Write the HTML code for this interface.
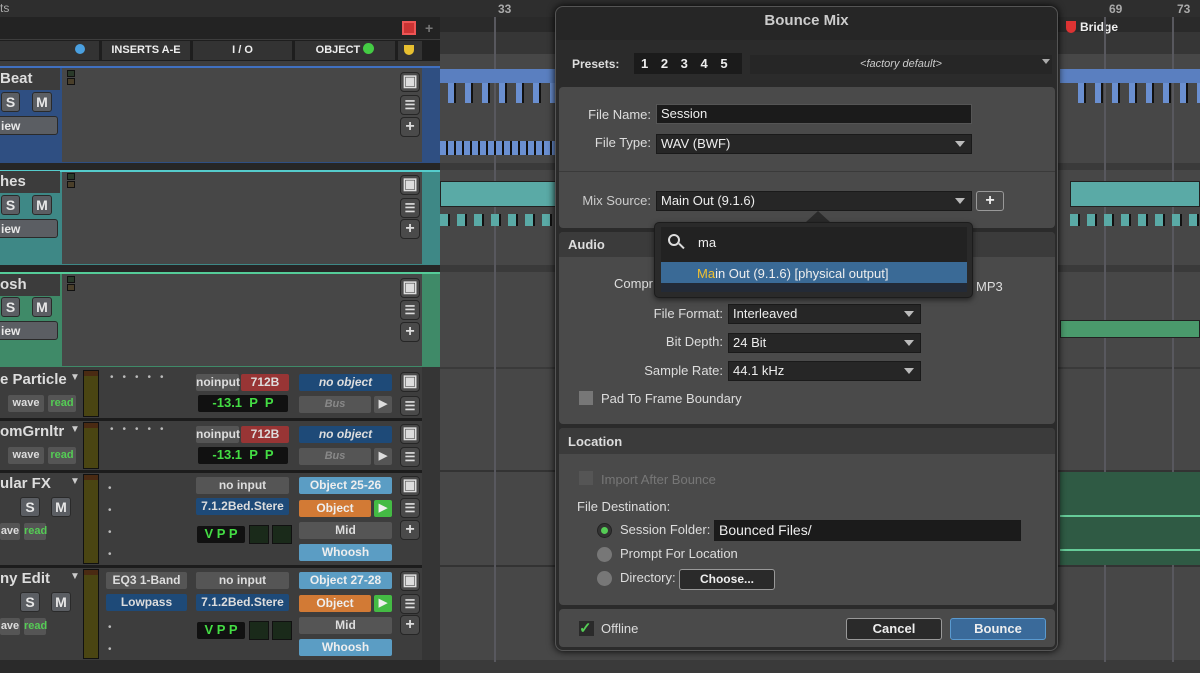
<!DOCTYPE html><html><head><meta charset="utf-8"><style>
*{margin:0;padding:0;box-sizing:border-box}
body{width:1200px;height:673px;overflow:hidden;background:#3d3d3d;font-family:"Liberation Sans",sans-serif;position:relative}
.a{position:absolute}
.b{font-weight:bold}
.btn{position:absolute;background:#5b5e63;border:1px solid #2a2a2a;border-radius:3px;color:#e8e8e8;font-weight:bold;font-size:14px;text-align:center;line-height:18px}
.ic{position:absolute;width:20px;height:20px;background:#4a4a4a;border:1px solid #262626;border-radius:4px;color:#ddd;font-size:16px;font-weight:bold;text-align:center;line-height:18px}
.sm{position:absolute;font-size:11px;font-weight:bold;text-align:center;border-radius:2px;line-height:16px;height:17px}
.lab{position:absolute;color:#ddd;font-size:13px;text-align:right}
.fld{position:absolute;background:#262626;border:1px solid #1a1a1a;color:#eee;font-size:13px;padding-left:4px;line-height:18px;height:20px}
.fld i{position:absolute;right:6px;top:6px;border-left:5px solid transparent;border-right:5px solid transparent;border-top:6px solid #bbb}
.gl{position:absolute;top:17px;width:2px;height:645px;background:#58585e}
.nm{position:absolute;left:0;width:60px;height:22px;background:#3c3c3c;color:#ddd;font-size:15px;font-weight:bold;line-height:22px;white-space:nowrap;overflow:hidden}
</style></head><body>
<div class="a" style="left:0;top:0;width:1200px;height:17px;background:#2e2e2e"></div>
<div class="a" style="left:0;top:1px;color:#aaa;font-size:12px">ts</div>
<div class="a b" style="left:498px;top:2px;color:#aaa;font-size:12px">33</div>
<div class="a b" style="left:1109px;top:2px;color:#aaa;font-size:12px">69</div>
<div class="a b" style="left:1177px;top:2px;color:#aaa;font-size:12px">73</div>
<div class="a" style="left:0;top:17px;width:440px;height:22px;background:#232323"></div>
<div class="a" style="left:440px;top:17px;width:760px;height:15px;background:#2a2a2a"></div>
<div class="a" style="left:440px;top:32px;width:760px;height:22px;background:#363636"></div>
<div class="a" style="left:1066px;top:21px;width:10px;height:12px;background:#d33;border-radius:0 0 5px 5px"></div>
<div class="a b" style="left:1080px;top:20px;color:#eee;font-size:12px">Bridge</div>
<div class="a" style="left:402px;top:21px;width:14px;height:14px;background:#c33;border:2px solid #e55"></div>
<div class="a" style="left:425px;top:20px;color:#777;font-size:14px;font-weight:bold">+</div>
<div class="a" style="left:0;top:40px;width:440px;height:21px;background:#1e1e1e"></div>
<div class="a" style="left:0;top:41px;width:99px;height:19px;background:#333"></div>
<div class="a" style="left:75px;top:44px;width:10px;height:10px;border-radius:50%;background:#4aa0e0"></div>
<div class="a" style="left:102px;top:41px;width:88px;height:19px;background:#333;color:#eee;font-size:11px;font-weight:bold;text-align:center;line-height:19px">INSERTS A-E</div>
<div class="a" style="left:193px;top:41px;width:99px;height:19px;background:#333;color:#eee;font-size:11px;font-weight:bold;text-align:center;line-height:19px">I / O</div>
<div class="a" style="left:295px;top:41px;width:100px;height:19px;background:#333;color:#eee;font-size:11px;font-weight:bold;text-align:center;line-height:19px">OBJECT <span style="display:inline-block;width:11px;height:11px;border-radius:50%;background:#4c4;vertical-align:-1px"></span></div>
<div class="a" style="left:398px;top:41px;width:24px;height:19px;background:#333"></div>
<div class="a" style="left:404px;top:45px;width:10px;height:10px;background:#e8c030;border-radius:0 0 5px 5px"></div>
<div class="a" style="left:440px;top:54px;width:760px;height:619px;background:#474747"></div>
<div class="a" style="left:440px;top:163px;width:760px;height:7px;background:#3a3a3a"></div>
<div class="a" style="left:440px;top:265px;width:760px;height:7px;background:#3a3a3a"></div>
<div class="a" style="left:440px;top:367px;width:760px;height:2px;background:#3a3a3a"></div>
<div class="a" style="left:440px;top:470px;width:760px;height:2px;background:#333"></div>
<div class="a" style="left:440px;top:565px;width:760px;height:2px;background:#333"></div>
<div class="a" style="left:440px;top:660px;width:760px;height:13px;background:#3a3a3a"></div>
<div class="gl" style="left:494px"></div><div class="gl" style="left:1104px"></div><div class="gl" style="left:1172px"></div>
<div class="a" style="left:0;top:66px;width:440px;height:97px;background:#2f4f82;border-top:2px solid #4070c0"></div>
<div class="a" style="left:62px;top:68px;width:360px;height:94px;background:#474747"></div>
<div class="a" style="left:0;top:163px;width:440px;height:7px;background:#262626"></div>
<div class="a" style="left:0;top:170px;width:440px;height:95px;background:#3e8886;border-top:2px solid #5cc"></div>
<div class="a" style="left:62px;top:172px;width:360px;height:92px;background:#474747"></div>
<div class="a" style="left:0;top:265px;width:440px;height:7px;background:#262626"></div>
<div class="a" style="left:0;top:272px;width:440px;height:95px;background:#3f8a68;border-top:2px solid #5c9"></div>
<div class="a" style="left:62px;top:274px;width:360px;height:92px;background:#474747"></div>
<div class="nm" style="top:68px">Beat</div>
<div class="nm" style="top:171px">hes</div>
<div class="nm" style="top:274px">osh</div>
<div class="btn" style="left:1px;top:92px;width:19px;height:20px">S</div><div class="btn" style="left:32px;top:92px;width:20px;height:20px">M</div>
<div class="btn" style="left:1px;top:195px;width:19px;height:20px">S</div><div class="btn" style="left:32px;top:195px;width:20px;height:20px">M</div>
<div class="btn" style="left:1px;top:297px;width:19px;height:20px">S</div><div class="btn" style="left:32px;top:297px;width:20px;height:20px">M</div>
<div class="btn" style="left:-5px;top:116px;width:63px;height:19px;text-align:left;padding-left:5px;font-size:12px">iew</div>
<div class="btn" style="left:-5px;top:219px;width:63px;height:19px;text-align:left;padding-left:5px;font-size:12px">iew</div>
<div class="btn" style="left:-5px;top:321px;width:63px;height:19px;text-align:left;padding-left:5px;font-size:12px">iew</div>
<div class="a" style="left:67px;top:70px;width:8px;height:7px;background:#2a3a2a;border:1px solid #111"></div><div class="a" style="left:67px;top:78px;width:8px;height:7px;background:#4a3f2a;border:1px solid #111"></div>
<div class="a" style="left:67px;top:173px;width:8px;height:7px;background:#2a3a2a;border:1px solid #111"></div><div class="a" style="left:67px;top:181px;width:8px;height:7px;background:#4a3f2a;border:1px solid #111"></div>
<div class="a" style="left:67px;top:276px;width:8px;height:7px;background:#2a3a2a;border:1px solid #111"></div><div class="a" style="left:67px;top:284px;width:8px;height:7px;background:#4a3f2a;border:1px solid #111"></div>
<div class="ic" style="left:400px;top:72px">▣</div><div class="ic" style="left:400px;top:95px;font-size:12px">☰</div><div class="ic" style="left:400px;top:117px">+</div>
<div class="ic" style="left:400px;top:175px">▣</div><div class="ic" style="left:400px;top:198px;font-size:12px">☰</div><div class="ic" style="left:400px;top:219px">+</div>
<div class="ic" style="left:400px;top:278px">▣</div><div class="ic" style="left:400px;top:300px;font-size:12px">☰</div><div class="ic" style="left:400px;top:322px">+</div>
<div class="a" style="left:440px;top:69px;width:120px;height:14px;background:#5a7fc0"></div>
<div class="a" style="left:440px;top:83px;width:120px;height:20px;background:repeating-linear-gradient(90deg,transparent 0 8px,#6a8fd0 8px 14px,#111 14px 16px,transparent 16px 17px)"></div>
<div class="a" style="left:1060px;top:69px;width:140px;height:14px;background:#5a7fc0"></div>
<div class="a" style="left:1078px;top:83px;width:122px;height:20px;background:repeating-linear-gradient(90deg,#6a8fd0 0 6px,#111 6px 8px,transparent 8px 17px)"></div>
<div class="a" style="left:440px;top:141px;width:120px;height:14px;background:repeating-linear-gradient(90deg,#6a8fd0 0 6px,#111 6px 8px)"></div>
<div class="a" style="left:440px;top:181px;width:120px;height:26px;background:#5aaaa6;border:1px solid #222"></div>
<div class="a" style="left:1070px;top:181px;width:130px;height:26px;background:#5aaaa6;border:1px solid #222"></div>
<div class="a" style="left:440px;top:214px;width:120px;height:12px;background:repeating-linear-gradient(90deg,#5aaaa6 0 8px,#111 8px 10px,#474747 10px 17px)"></div>
<div class="a" style="left:1070px;top:214px;width:130px;height:12px;background:repeating-linear-gradient(90deg,#5aaaa6 0 8px,#111 8px 10px,#474747 10px 17px)"></div>
<div class="a" style="left:1060px;top:320px;width:140px;height:18px;background:#4a9a6c;border:1px solid #222"></div>
<div class="a" style="left:1060px;top:472px;width:140px;height:93px;background:#2f5a44"></div>
<div class="a" style="left:1060px;top:515px;width:140px;height:2px;background:#6c9"></div>
<div class="a" style="left:1060px;top:549px;width:140px;height:2px;background:#6c9"></div>
<div class="a" style="left:0;top:367px;width:440px;height:306px;background:#3d3d3d"></div>
<div class="a" style="left:0;top:418px;width:440px;height:3px;background:#1c1c1c"></div>
<div class="a" style="left:0;top:470px;width:440px;height:3px;background:#1c1c1c"></div>
<div class="a" style="left:0;top:565px;width:440px;height:3px;background:#1c1c1c"></div>
<div class="a" style="left:0;top:660px;width:440px;height:13px;background:#2a2a2a"></div>
<div class="a" style="left:83px;top:370px;width:16px;height:47px;background:linear-gradient(#4a2a12 0 5px,#4a4512 5px);border:1px solid #111"></div>
<div class="a" style="left:83px;top:422px;width:16px;height:47px;background:linear-gradient(#4a2a12 0 5px,#4a4512 5px);border:1px solid #111"></div>
<div class="a" style="left:83px;top:474px;width:16px;height:90px;background:linear-gradient(#4a2a12 0 5px,#4a4512 5px);border:1px solid #111"></div>
<div class="a" style="left:83px;top:569px;width:16px;height:90px;background:linear-gradient(#4a2a12 0 5px,#4a4512 5px);border:1px solid #111"></div>
<div class="a b" style="left:0;top:371px;color:#ddd;font-size:15px">e Particle</div>
<div class="a b" style="left:0;top:423px;color:#ddd;font-size:15px">omGrnltr</div>
<div class="a b" style="left:0;top:475px;color:#ddd;font-size:15px">ular FX</div>
<div class="a b" style="left:0;top:570px;color:#ddd;font-size:15px">ny Edit</div>
<div class="a" style="left:70px;top:372px;color:#ccc;font-size:10px">▼</div><div class="a" style="left:70px;top:424px;color:#ccc;font-size:10px">▼</div><div class="a" style="left:70px;top:476px;color:#ccc;font-size:10px">▼</div><div class="a" style="left:70px;top:571px;color:#ccc;font-size:10px">▼</div>
<div class="sm" style="left:8px;top:395px;width:36px;background:#555;color:#ddd">wave</div><div class="sm" style="left:48px;top:395px;width:28px;background:#555;color:#5c5">read</div>
<div class="sm" style="left:8px;top:447px;width:36px;background:#555;color:#ddd">wave</div><div class="sm" style="left:48px;top:447px;width:28px;background:#555;color:#5c5">read</div>
<div class="btn" style="left:20px;top:497px;width:20px;height:20px">S</div><div class="btn" style="left:51px;top:497px;width:20px;height:20px">M</div>
<div class="btn" style="left:20px;top:592px;width:20px;height:20px">S</div><div class="btn" style="left:51px;top:592px;width:20px;height:20px">M</div>
<div class="sm" style="left:0;top:523px;width:20px;background:#555;color:#ddd">ave</div><div class="sm" style="left:24px;top:523px;width:22px;background:#555;color:#5c5">read</div>
<div class="sm" style="left:0;top:618px;width:20px;background:#555;color:#ddd">ave</div><div class="sm" style="left:24px;top:618px;width:22px;background:#555;color:#5c5">read</div>
<div class="a" style="left:110px;top:372px;color:#bbb;font-size:10px;letter-spacing:9px">•••••</div>
<div class="a" style="left:110px;top:424px;color:#bbb;font-size:10px;letter-spacing:9px">•••••</div>
<div class="a" style="left:108px;top:478px;color:#bbb;font-size:10px;line-height:22px">•<br>•<br>•<br>•</div>
<div class="a" style="left:108px;top:617px;color:#bbb;font-size:10px;line-height:22px">•<br>•</div>
<div class="sm" style="left:106px;top:572px;width:81px;background:#555;color:#ddd;font-size:12px">EQ3 1-Band</div>
<div class="sm" style="left:106px;top:594px;width:81px;background:#1e4a78;color:#ddd;font-size:12px">Lowpass</div>
<div class="sm" style="left:196px;top:374px;width:43px;background:#555;color:#ddd;font-size:12px">noinput</div><div class="sm" style="left:241px;top:374px;width:48px;background:#983535;color:#ddd;font-size:12px">712B</div>
<div class="sm" style="left:196px;top:426px;width:43px;background:#555;color:#ddd;font-size:12px">noinput</div><div class="sm" style="left:241px;top:426px;width:48px;background:#983535;color:#ddd;font-size:12px">712B</div>
<div class="sm" style="left:198px;top:395px;width:90px;background:#111;color:#4d4;font-size:13px">-13.1 &nbsp;P &nbsp;P</div>
<div class="sm" style="left:198px;top:447px;width:90px;background:#111;color:#4d4;font-size:13px">-13.1 &nbsp;P &nbsp;P</div>
<div class="sm" style="left:196px;top:477px;width:93px;background:#555;color:#ddd;font-size:12px">no input</div>
<div class="sm" style="left:196px;top:572px;width:93px;background:#555;color:#ddd;font-size:12px">no input</div>
<div class="sm" style="left:196px;top:498px;width:93px;background:#1e4a78;color:#ddd;font-size:12px">7.1.2Bed.Stere</div>
<div class="sm" style="left:196px;top:594px;width:93px;background:#1e4a78;color:#ddd;font-size:12px">7.1.2Bed.Stere</div>
<div class="sm" style="left:197px;top:526px;width:48px;background:#111;color:#4d4;font-size:13px">V P P</div>
<div class="sm" style="left:197px;top:622px;width:48px;background:#111;color:#4d4;font-size:13px">V P P</div>
<div class="a" style="left:249px;top:525px;width:20px;height:19px;background:#1a2a1a;border:1px solid #111"></div><div class="a" style="left:272px;top:525px;width:20px;height:19px;background:#1a2a1a;border:1px solid #111"></div>
<div class="a" style="left:249px;top:621px;width:20px;height:19px;background:#1a2a1a;border:1px solid #111"></div><div class="a" style="left:272px;top:621px;width:20px;height:19px;background:#1a2a1a;border:1px solid #111"></div>
<div class="sm" style="left:299px;top:374px;width:93px;background:#1e4a78;color:#ddd;font-style:italic;font-size:12px">no object</div>
<div class="sm" style="left:299px;top:426px;width:93px;background:#1e4a78;color:#ddd;font-style:italic;font-size:12px">no object</div>
<div class="sm" style="left:299px;top:396px;width:72px;background:#555;color:#888;font-style:italic">Bus</div>
<div class="sm" style="left:299px;top:448px;width:72px;background:#555;color:#888;font-style:italic">Bus</div>
<div class="sm" style="left:374px;top:396px;width:18px;background:#555;color:#ddd">▶</div>
<div class="sm" style="left:374px;top:448px;width:18px;background:#555;color:#ddd">▶</div>
<div class="sm" style="left:299px;top:477px;width:93px;background:#5b9dc4;color:#eee;font-size:12px">Object 25-26</div>
<div class="sm" style="left:299px;top:572px;width:93px;background:#5b9dc4;color:#eee;font-size:12px">Object 27-28</div>
<div class="sm" style="left:299px;top:500px;width:72px;background:#d27a35;color:#eee;font-size:12px">Object</div>
<div class="sm" style="left:299px;top:595px;width:72px;background:#d27a35;color:#eee;font-size:12px">Object</div>
<div class="sm" style="left:374px;top:500px;width:18px;background:#4b4;color:#eee">▶</div>
<div class="sm" style="left:374px;top:595px;width:18px;background:#4b4;color:#eee">▶</div>
<div class="sm" style="left:299px;top:522px;width:93px;background:#555;color:#ddd;font-size:12px">Mid</div>
<div class="sm" style="left:299px;top:617px;width:93px;background:#555;color:#ddd;font-size:12px">Mid</div>
<div class="sm" style="left:299px;top:544px;width:93px;background:#5b9dc4;color:#eee;font-size:12px">Whoosh</div>
<div class="sm" style="left:299px;top:639px;width:93px;background:#5b9dc4;color:#eee;font-size:12px">Whoosh</div>
<div class="ic" style="left:400px;top:372px">▣</div><div class="ic" style="left:400px;top:396px;font-size:12px">☰</div>
<div class="ic" style="left:400px;top:424px">▣</div><div class="ic" style="left:400px;top:447px;font-size:12px">☰</div>
<div class="ic" style="left:400px;top:476px">▣</div><div class="ic" style="left:400px;top:498px;font-size:12px">☰</div><div class="ic" style="left:400px;top:520px">+</div>
<div class="ic" style="left:400px;top:571px">▣</div><div class="ic" style="left:400px;top:594px;font-size:12px">☰</div><div class="ic" style="left:400px;top:615px">+</div>
<div class="a" style="left:422px;top:367px;width:18px;height:293px;background:#353535"></div>
<div class="a" style="left:555px;top:6px;width:503px;height:645px;background:#2b2b2b;border:1px solid #555;border-radius:8px;box-shadow:0 0 8px #000"></div>
<div class="a" style="left:556px;top:7px;width:501px;height:33px;background:#262626;border-radius:8px 8px 0 0"></div>
<div class="a b" style="left:555px;top:12px;width:503px;text-align:center;color:#ccc;font-size:15px">Bounce Mix</div>
<div class="a b" style="left:572px;top:57px;color:#ddd;font-size:12px">Presets:</div>
<div class="a" style="left:634px;top:53px;width:108px;height:21px;background:#1b1b1b"></div>
<div class="a b" style="left:635px;top:54px;width:108px;color:#eee;font-size:13px;word-spacing:9px;padding-left:6px;line-height:20px">1 2 3 4 5</div>
<div class="a" style="left:750px;top:55px;width:302px;height:19px;background:#262626;color:#ccc;font-size:11px;font-style:italic;text-align:center;line-height:19px">&lt;factory default&gt;</div>
<div class="a" style="left:1042px;top:59px;border-left:4px solid transparent;border-right:4px solid transparent;border-top:5px solid #aaa"></div>
<div class="a" style="left:559px;top:87px;width:496px;height:141px;background:#4a4a4a;border-radius:4px"></div>
<div class="a" style="left:559px;top:171px;width:496px;height:1px;background:#3a3a3a"></div>
<div class="lab" style="left:560px;top:107px;width:91px">File Name:</div>
<div class="fld" style="left:656px;top:104px;width:316px;background:#1b1b1b;border-color:#555">Session</div>
<div class="lab" style="left:560px;top:135px;width:91px">File Type:</div>
<div class="fld" style="left:656px;top:134px;width:316px">WAV (BWF)<i></i></div>
<div class="lab" style="left:560px;top:193px;width:91px;color:#ccc">Mix Source:</div>
<div class="fld" style="left:656px;top:191px;width:316px">Main Out (9.1.6)<i></i></div>
<div class="a" style="left:976px;top:191px;width:28px;height:20px;border:1px solid #999;border-radius:3px;color:#eee;font-weight:bold;text-align:center;line-height:17px;font-size:16px">+</div>
<div class="a" style="left:559px;top:232px;width:496px;height:192px;background:#4a4a4a;border-radius:4px"></div>
<div class="a" style="left:559px;top:232px;width:496px;height:25px;background:#3b3b3b;border-radius:4px 4px 0 0"></div>
<div class="a b" style="left:568px;top:237px;color:#ddd;font-size:13px">Audio</div>
<div class="a" style="left:614px;top:276px;color:#ddd;font-size:13px">Compr</div>
<div class="a" style="left:976px;top:279px;color:#ddd;font-size:13px">MP3</div>
<div class="lab" style="left:600px;top:306px;width:123px">File Format:</div>
<div class="fld" style="left:728px;top:304px;width:193px">Interleaved<i></i></div>
<div class="lab" style="left:600px;top:334px;width:123px">Bit Depth:</div>
<div class="fld" style="left:728px;top:333px;width:193px">24 Bit<i></i></div>
<div class="lab" style="left:600px;top:363px;width:123px">Sample Rate:</div>
<div class="fld" style="left:728px;top:361px;width:193px">44.1 kHz<i></i></div>
<div class="a" style="left:579px;top:391px;width:14px;height:14px;background:#777"></div>
<div class="a" style="left:601px;top:391px;color:#ddd;font-size:13px">Pad To Frame Boundary</div>
<div class="a" style="left:806px;top:211px;border-left:12px solid transparent;border-right:12px solid transparent;border-bottom:11px solid #2a2a2a"></div>
<div class="a" style="left:654px;top:222px;width:319px;height:76px;background:#2a2a2a;border:1px solid #1c1c1c;border-radius:5px;box-shadow:0 2px 6px #0008"></div>
<div class="a" style="left:661px;top:227px;width:306px;height:35px;background:#222"></div>
<div class="a" style="left:668px;top:234px;width:12px;height:12px;border:2px solid #ddd;border-radius:50%"></div>
<div class="a" style="left:678px;top:245px;width:7px;height:2px;background:#ddd;transform:rotate(45deg)"></div>
<div class="a" style="left:698px;top:235px;color:#eee;font-size:13px">ma</div>
<div class="a" style="left:661px;top:262px;width:306px;height:21px;background:#3a6a96"></div>
<div class="a" style="left:661px;top:283px;width:306px;height:9px;background:#232a36"></div>
<div class="a" style="left:697px;top:266px;color:#eee;font-size:13px"><span style="color:#f0c030">Ma</span>in Out (9.1.6) [physical output]</div>
<div class="a" style="left:559px;top:428px;width:496px;height:177px;background:#4a4a4a;border-radius:4px"></div>
<div class="a" style="left:559px;top:428px;width:496px;height:26px;background:#3b3b3b;border-radius:4px 4px 0 0"></div>
<div class="a b" style="left:568px;top:434px;color:#ddd;font-size:13px">Location</div>
<div class="a" style="left:579px;top:471px;width:14px;height:14px;background:#555"></div>
<div class="a" style="left:601px;top:472px;color:#777;font-size:13px">Import After Bounce</div>
<div class="a" style="left:577px;top:499px;color:#ddd;font-size:13px">File Destination:</div>
<div class="a" style="left:597px;top:523px;width:15px;height:15px;border-radius:50%;background:#333;border:1px solid #222"></div>
<div class="a" style="left:601px;top:527px;width:7px;height:7px;border-radius:50%;background:#5c5"></div>
<div class="a" style="left:620px;top:522px;color:#ddd;font-size:13px">Session Folder:</div>
<div class="fld" style="left:714px;top:520px;width:307px;height:21px;background:#1b1b1b;font-size:14px">Bounced Files/</div>
<div class="a" style="left:597px;top:547px;width:15px;height:15px;border-radius:50%;background:#777"></div>
<div class="a" style="left:620px;top:546px;color:#ddd;font-size:13px">Prompt For Location</div>
<div class="a" style="left:597px;top:571px;width:15px;height:15px;border-radius:50%;background:#777"></div>
<div class="a" style="left:620px;top:570px;color:#ddd;font-size:13px">Directory:</div>
<div class="a b" style="left:679px;top:569px;width:96px;height:21px;border:1px solid #999;border-radius:3px;background:#2a2a2a;color:#eee;font-size:12px;text-align:center;line-height:19px">Choose...</div>
<div class="a" style="left:559px;top:609px;width:496px;height:38px;background:#4a4a4a;border-radius:4px"></div>
<div class="a" style="left:579px;top:621px;width:15px;height:15px;background:#2a2a2a;color:#5c5;font-size:15px;line-height:15px;font-weight:bold">✓</div>
<div class="a" style="left:601px;top:621px;color:#ddd;font-size:13px">Offline</div>
<div class="a b" style="left:846px;top:618px;width:96px;height:22px;border:1px solid #999;border-radius:3px;background:#2a2a2a;color:#eee;font-size:13px;text-align:center;line-height:20px">Cancel</div>
<div class="a b" style="left:950px;top:618px;width:96px;height:22px;border:1px solid #5a9ad0;border-radius:3px;background:#3a6a9a;color:#eee;font-size:13px;text-align:center;line-height:20px">Bounce</div>
</body></html>
